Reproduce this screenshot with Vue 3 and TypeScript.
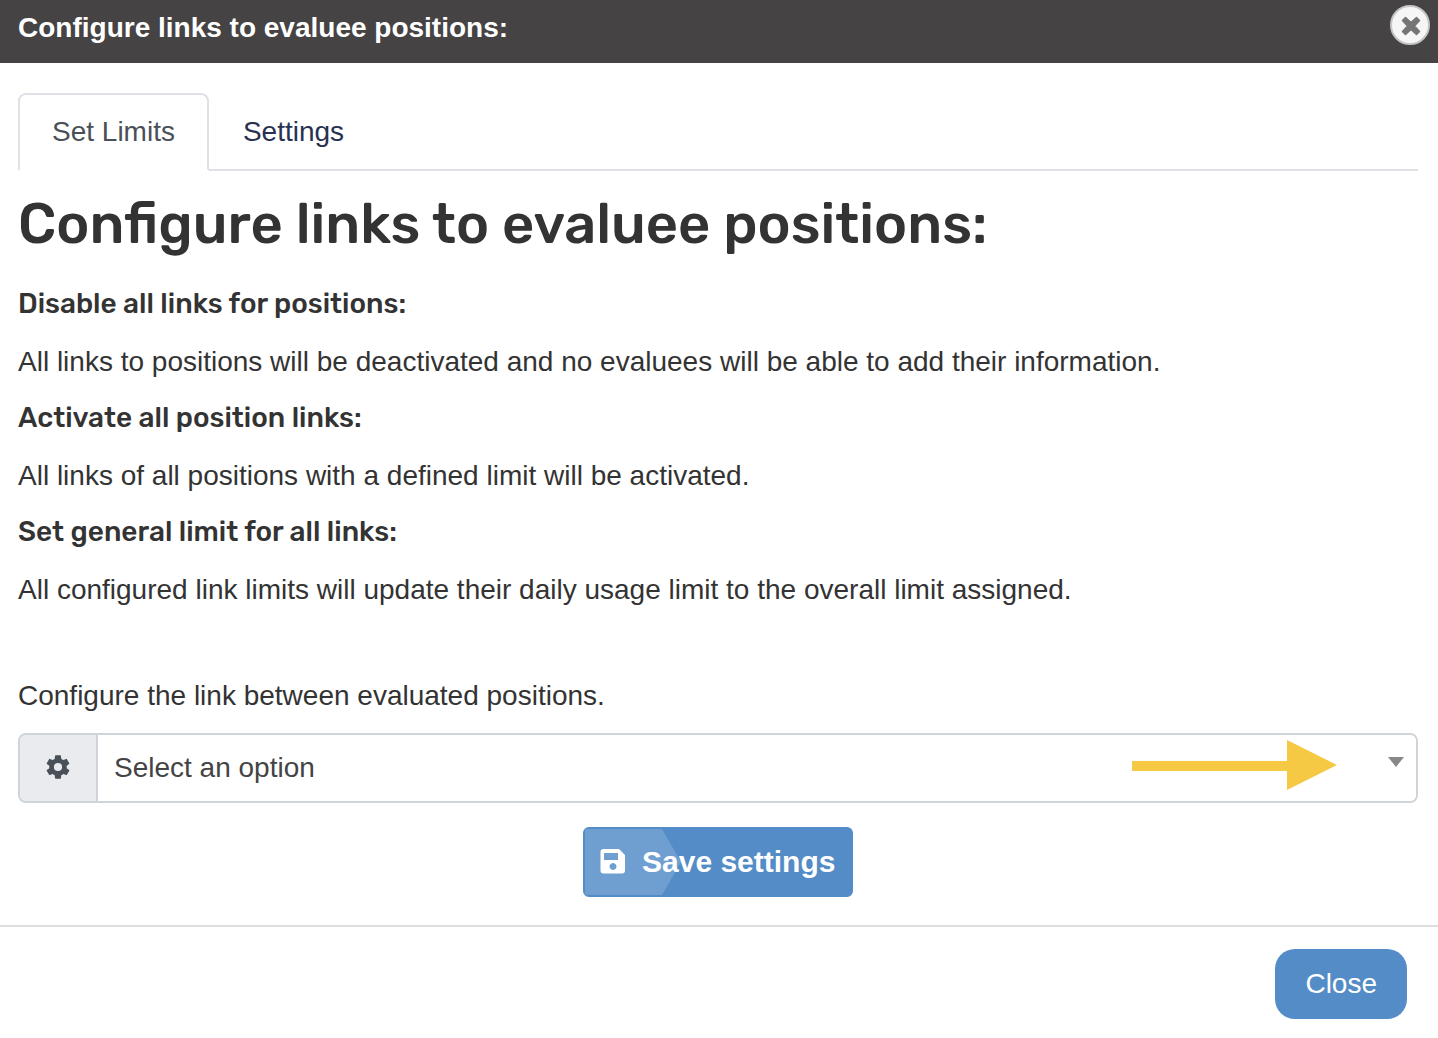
<script setup lang="ts">
import { ref } from 'vue'

interface HelpItem {
  title: string
  text: string
}

const title = 'Configure links to evaluee positions:'
const tabs: string[] = ['Set Limits', 'Settings']
const activeTab = ref<string>(tabs[0])
const option = ref<string>('')

const helpItems: HelpItem[] = [
  {
    title: 'Disable all links for positions:',
    text: 'All links to positions will be deactivated and no evaluees will be able to add their information.',
  },
  {
    title: 'Activate all position links:',
    text: 'All links of all positions with a defined limit will be activated.',
  },
  {
    title: 'Set general limit for all links:',
    text: 'All configured link limits will update their daily usage limit to the overall limit assigned.',
  },
]
</script>

<template>
  <div class="dialog" role="dialog" aria-labelledby="dialog-title">
    <header class="dialog-header">
      <span id="dialog-title">{{ title }}</span>
      <button class="dismiss" type="button" aria-label="Dismiss">
        <svg viewBox="0 0 40 40" width="40" height="40" aria-hidden="true">
          <circle cx="20" cy="20" r="19" fill="#f6f6f6" stroke="#c4c4c4" stroke-width="2" />
          <path
            d="M15.500 12.500L21 17.500L26.500 12.500L29.500 15.500L24.500 21L29.500 26.500L26.500 29.500L21 24.500L15.500 29.500L12.500 26.500L17.500 21L12.500 15.500Z"
            fill="#757575"
            stroke="#757575"
            stroke-width="1.5"
            stroke-linejoin="round"
          />
        </svg>
      </button>
    </header>

    <main class="dialog-body">
      <nav class="tabs" role="tablist">
        <button
          v-for="tab in tabs"
          :key="tab"
          class="tab"
          :class="{ active: tab === activeTab }"
          type="button"
          role="tab"
          :aria-selected="tab === activeTab"
          @click="activeTab = tab"
        >
          {{ tab }}
        </button>
      </nav>

      <h1>{{ title }}</h1>

      <section v-for="item in helpItems" :key="item.title" class="help">
        <h2>{{ item.title }}</h2>
        <p>{{ item.text }}</p>
      </section>

      <form class="form" @submit.prevent>
        <label for="link-option">Configure the link between evaluated positions.</label>
        <div class="input-group">
          <span class="addon">
            <svg viewBox="0 0 24 24" width="28" height="28" aria-hidden="true">
              <path
                fill="#495057"
                d="M12 15.5A3.5 3.5 0 0 1 8.500 12 3.500 3.500 0 0 1 12 8.500a3.500 3.500 0 0 1 3.500 3.500 3.500 3.500 0 0 1-3.500 3.500m7.430-2.530c.04-.32.07-.64.07-.97s-.03-.66-.07-1l2.110-1.630c.19-.15.24-.42.12-.64l-2-3.460c-.12-.22-.39-.31-.61-.22l-2.490 1c-.52-.39-1.060-.73-1.690-.98l-.37-2.650A.506.506 0 0 0 14 2h-4c-.25 0-.46.18-.5.42l-.37 2.650c-.63.25-1.170.59-1.690.98l-2.490-1c-.22-.09-.49 0-.61.22l-2 3.460c-.13.22-.07.49.12.64L4.570 11c-.04.34-.07.67-.07 1s.03.65.07.97l-2.110 1.660c-.19.15-.25.42-.12.64l2 3.460c.12.22.39.3.61.22l2.490-1.010c.52.4 1.060.74 1.690.99l.37 2.650c.04.24.25.42.5.42h4c.25 0 .46-.18.5-.42l.37-2.650c.63-.26 1.170-.59 1.690-.99l2.490 1.010c.22.08.49 0 .61-.22l2-3.460c.12-.22.07-.49-.12-.64z"
              />
            </svg>
          </span>
          <select id="link-option" v-model="option">
            <option value="">Select an option</option>
          </select>
          <svg class="caret" viewBox="0 0 16 10" width="16" height="10" aria-hidden="true">
            <path d="M0 0H16L8 10Z" fill="#888888" />
          </svg>
          <svg class="pointer" viewBox="0 0 205 50" width="205" height="50" aria-hidden="true">
            <path d="M0 21H155V0L205 25L155 50V31H0Z" fill="#f5c944" />
          </svg>
        </div>
        <button class="save" type="submit">
          <svg viewBox="0 0 26 26" width="26" height="26" aria-hidden="true">
            <path
              fill="#ffffff"
              fill-rule="evenodd"
              d="M3.500 0H19L25 6V21.500a3 3 0 0 1-3 3H3.500a3 3 0 0 1-3-3V3a3 3 0 0 1 3-3ZM4 4V11H18V4ZM13 14a3.500 3.500 0 1 0 .01 0Z"
            />
          </svg>
          <span>Save settings</span>
        </button>
      </form>
    </main>

    <footer class="dialog-footer">
      <button class="close" type="button">Close</button>
    </footer>
  </div>
</template>

<style>
body {
  margin: 0;
  background: #ffffff;
}
</style>

<style scoped>
.dialog {
  font-family: "Liberation Sans", Arial, sans-serif;
  font-size: 28px;
  line-height: 42px;
  color: #333333;
}

.dialog *,
.dialog {
  box-sizing: border-box;
}

button,
select {
  font: inherit;
  cursor: pointer;
}

.dialog-header {
  display: flex;
  justify-content: space-between;
  align-items: flex-start;
  padding: 5px 8px 13px 18px;
  background: #454343;
  color: #ffffff;
  font-weight: 700;
  line-height: 45px;
}

.dismiss {
  width: 40px;
  height: 40px;
  padding: 0;
  border: 0;
  border-radius: 50%;
  background: transparent;
}

.dismiss svg {
  display: block;
}

.dialog-body {
  padding: 30px 20px 28px 18px;
}

.tabs {
  display: flex;
  border-bottom: 2px solid #dee2e6;
}

.tab {
  margin-bottom: -2px;
  padding: 16px 32px;
  border: 2px solid transparent;
  border-radius: 8px 8px 0 0;
  background: transparent;
  color: #283150;
}

.tab.active {
  border-color: #dee2e6 #dee2e6 #ffffff;
  background: #ffffff;
  color: #495057;
}

h1,
h2 {
  margin: 0;
  font-family: Rubik, Roboto, sans-serif;
  font-weight: 500;
}

h1 {
  padding: 19px 0 29px;
  font-size: 56px;
  line-height: 68px;
}

h2 {
  font-size: 28px;
  line-height: 34px;
}

.help p {
  margin: 0;
  padding: 20px 0 18px;
}

.form {
  display: flex;
  flex-direction: column;
  padding-top: 46px;
}

.input-group {
  position: relative;
  display: flex;
  height: 70px;
  margin: 16px 0 24px;
  border: 2px solid #ced4da;
  border-radius: 8px;
  overflow: hidden;
}

.addon {
  display: flex;
  align-items: center;
  justify-content: center;
  width: 78px;
  padding-bottom: 2px;
  border-right: 2px solid #ced4da;
  background: #eaebef;
}

select {
  flex: 1;
  min-width: 0;
  padding: 0 56px 0 16px;
  border: 0;
  appearance: none;
  background: #ffffff;
  color: #444444;
}

.caret,
.pointer {
  position: absolute;
  pointer-events: none;
}

.caret {
  top: 22px;
  right: 12px;
}

.pointer {
  top: 5px;
  right: 79px;
}

.save {
  position: relative;
  display: flex;
  align-items: center;
  align-self: center;
  gap: 16px;
  width: 270px;
  height: 70px;
  padding: 0 15px;
  border: 2px solid #538cc6;
  border-radius: 6px;
  background: #538cc6;
  color: #ffffff;
  font-size: 30px;
  font-weight: 700;
  white-space: nowrap;
}

.save::before {
  content: "";
  position: absolute;
  inset: 0 auto 0 0;
  width: 96px;
  background: #6f9fd0;
  clip-path: polygon(0 0, 77px 0, 100% 50%, 77px 100%, 0 100%);
}

.save > * {
  position: relative;
}

.dialog-footer {
  display: flex;
  justify-content: flex-end;
  padding: 22px 31px 19px;
  border-top: 2px solid #dddfdf;
}

.close {
  height: 70px;
  padding: 0 30px;
  border: 0;
  border-radius: 20px;
  background: #538cc6;
  color: #ffffff;
}
</style>
